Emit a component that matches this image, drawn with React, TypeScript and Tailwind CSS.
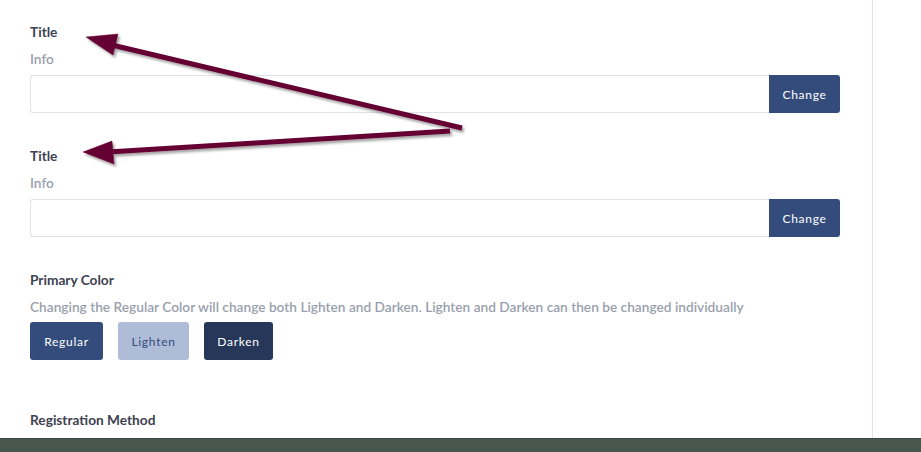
import React from "react";

const font = { fontFamily: "Lato, 'Liberation Sans', sans-serif" };

function Field({ title, info }: { title: string; info: string }) {
  return (
    <div className="mb-[35px]">
      <div className="h-4 text-[13.7px] font-bold leading-4 text-[#3d4250]">{title}</div>
      <div className="mt-[11px] h-4 text-[13.7px] font-semibold leading-4 text-[#9a9fae]">{info}</div>
      <div className="mt-2 flex h-[38px]">
        <input className="h-full flex-1 rounded-l-[3px] border border-r-0 border-[#e0e2e9] bg-white px-3 text-sm outline-none" />
        <button className="h-full w-[71px] rounded-r-[3px] bg-[#344c7c] pt-px text-[12px] tracking-[0.06em] text-white">
          Change
        </button>
      </div>
    </div>
  );
}

function Arrows() {
  return (
    <svg className="pointer-events-none absolute left-0 top-0" width="921" height="452">
      <defs>
        <filter id="sh" x="-10%" y="-50%" width="120%" height="200%">
          <feDropShadow dx="2" dy="2.5" stdDeviation="1.2" floodColor="#000" floodOpacity="0.35" />
        </filter>
      </defs>
      <g fill="#650033" stroke="#650033" filter="url(#sh)">
        <line x1="462" y1="128" x2="112" y2="45" strokeWidth="5" />
        <polygon points="86,37 118,34 113,55" strokeWidth="0.5" />
        <line x1="450" y1="131" x2="108" y2="152" strokeWidth="5" />
        <polygon points="83,152 112,141 114,164" strokeWidth="0.5" />
      </g>
    </svg>
  );
}

export default function App() {
  return (
    <div className="relative flex h-[452px] w-[921px] flex-col overflow-hidden bg-white" style={font}>
      <div className="flex flex-1">
        <main className="w-[873px] border-r border-[#e0e2ee] pl-[30px] pr-[32px] pt-6">
          <Field title="Title" info="Info" />
          <Field title="Title" info="Info" />

          <div className="h-4 text-[13.7px] font-bold leading-4 text-[#3d4250]">Primary Color</div>
          <div className="mt-[11px] h-4 text-[13.7px] font-semibold leading-4 text-[#9a9fae]">
            Changing the Regular Color will change both Lighten and Darken. Lighten and Darken can then be changed individually
          </div>
          <div className="mt-[7px] flex gap-[15px]">
            <button className="h-[38px] w-[73px] rounded-[3px] bg-[#344c7c] pt-px text-[12px] tracking-[0.06em] text-white">
              Regular
            </button>
            <button className="h-[38px] w-[71px] rounded-[3px] bg-[#aebcd8] pt-px text-[12px] tracking-[0.06em] text-[#344c7c]">
              Lighten
            </button>
            <button className="h-[38px] w-[69px] rounded-[3px] bg-[#26375a] pt-px text-[12px] tracking-[0.06em] text-white">
              Darken
            </button>
          </div>

          <div className="mt-[52px] h-4 text-[13.7px] font-bold leading-4 text-[#3d4250]">Registration Method</div>
        </main>
        <div className="flex-1" />
      </div>
      <div className="h-[14px] border-t border-[#38463b] bg-[#47574b]" />
      <Arrows />
    </div>
  );
}
